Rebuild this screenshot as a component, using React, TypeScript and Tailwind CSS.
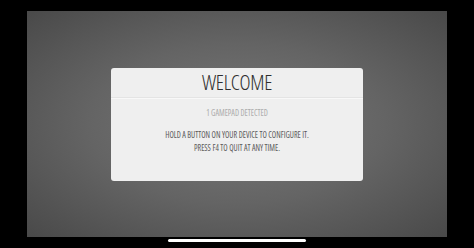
export default function App() {
  return (
    <div className="flex h-[248px] w-[474px] flex-col items-center bg-black font-['Open_Sans',sans-serif]">
      {/* screen */}
      <div className="mt-[11px] flex h-[226px] w-[420px] items-center justify-center bg-[radial-gradient(ellipse_at_center,#787878_0%,#646464_50%,#494949_100%)]">
        <div className="flex h-[113px] w-[252px] flex-col rounded-[3px] bg-[#efefef] text-center [font-stretch:75%]">
          <div className="flex h-[30px] items-center justify-center border-b border-[#e4e4e4]">
            <span className="text-[21px] font-light leading-none tracking-[-0.3px] text-[#2e2e2e]">WELCOME</span>
          </div>
          <div className="h-px bg-[#f8f8f8]" />
          <div className="mt-[9px] text-[8px] leading-[10px] text-[#ababab]">1 GAMEPAD DETECTED</div>
          <div className="mt-[10px] text-[8px] leading-[13px] text-[#5a5a5a]">
            <p>HOLD A BUTTON ON YOUR DEVICE TO CONFIGURE IT.</p>
            <p>PRESS F4 TO QUIT AT ANY TIME.</p>
          </div>
        </div>
      </div>
      {/* home indicator */}
      <div className="mt-[2px] h-[3px] w-[138px] rounded-full bg-white" />
    </div>
  );
}
